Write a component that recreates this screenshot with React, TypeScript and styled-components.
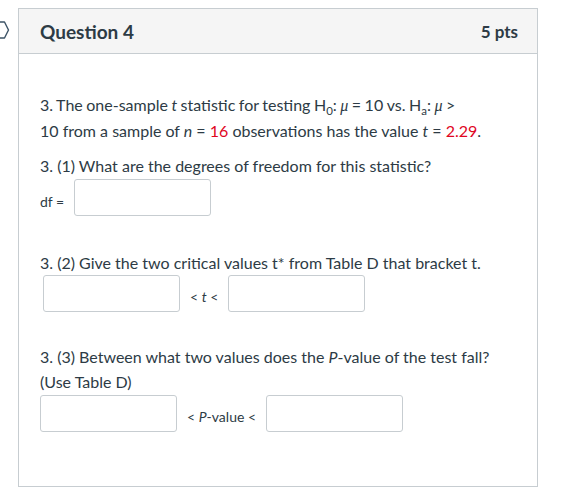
import React from 'react'
import styled, { createGlobalStyle } from 'styled-components'

const GlobalStyle = createGlobalStyle`
  html, body {
    margin: 0;
    padding: 0;
    background: #fff;
  }
  body {
    font-family: Lato, "Noto Sans", sans-serif;
    color: #2d3b45;
  }
`

const Page = styled.div`
  position: relative;
  padding: 8px 41px 0 18px;
  width: 579px;
  box-sizing: border-box;
`

const FlagIcon = styled.svg`
  position: absolute;
  left: 0;
  top: 21px;
`

const Card = styled.div`
  border: 1px solid #c7cdd1;
  height: 479px;
  box-sizing: border-box;
`

const Header = styled.div`
  display: flex;
  justify-content: space-between;
  align-items: center;
  height: 44px;
  padding: 0 19px 0 21px;
  background: #f5f5f5;
  border-bottom: 1px solid #c7cdd1;
`

const Title = styled.h2`
  margin: 0;
  font-size: 19px;
  font-weight: 700;
  color: #2d3b45;
`

const Points = styled.span`
  font-size: 17px;
  font-weight: 700;
  color: #2d3b45;
`

const Body = styled.div`
  padding: 38px 21px 0 21px;
  font-size: 16px;
  line-height: 25px;
`

const Para = styled.p<{ $gap?: number }>`
  margin: 0 0 ${p => p.$gap ?? 10}px 0;
`

const Tight = styled.span`
  word-spacing: -0.6px;
`

const Sub = styled.sub`
  font-size: 11.5px;
  line-height: 0;
`

const Mu = styled.i`
  font-family: "Liberation Serif", serif;
  font-size: 16px;
`

const Red = styled.span`
  color: #e0061f;
`

const Row = styled.div<{ $indent?: number; $gap?: number }>`
  display: flex;
  align-items: center;
  gap: 10px;
  margin-left: ${p => p.$indent ?? 0}px;
  margin-bottom: ${p => p.$gap ?? 0}px;
`

const Box = styled.input`
  width: 137px;
  height: 37px;
  box-sizing: border-box;
  border: 1px solid #c7cdd1;
  border-radius: 3px;
  background: #fff;
  margin: 0;
  padding: 0 6px;
  font: inherit;
`

const Small = styled.span<{ $shift?: number }>`
  font-size: 14px;
  position: relative;
  top: ${p => p.$shift ?? 0}px;
`

export default function App() {
  return (
    <>
      <GlobalStyle />
      <Page>
        <FlagIcon width="10" height="18" viewBox="0 0 10 18">
          <polyline points="0,1 4.5,1 8.5,9 4.5,17 0,17" fill="none" stroke="#3d5366" strokeWidth="1.4" strokeLinejoin="round" />
        </FlagIcon>
        <Card>
          <Header>
            <Title>Question 4</Title>
            <Points>5 pts</Points>
          </Header>
          <Body>
            <Para>
              <Tight>
                3. The one-sample <i>t</i> statistic for testing H<Sub>0</Sub>: <Mu>μ</Mu> = 10 vs. H<Sub>a</Sub>: <Mu>μ</Mu> &gt;
              </Tight>
              <br />
              10 from a sample of <i>n</i> = <Red>16</Red> observations has the value <i>t</i> = <Red>2.29</Red>.
            </Para>
            <Para $gap={1}>3. (1) What are the degrees of freedom for this statistic?</Para>
            <Row $gap={34}>
              <Small $shift={4}>df =</Small>
              <Box aria-label="df" />
            </Row>
            <Para $gap={0}>3. (2) Give the two critical values t* from Table D that bracket t.</Para>
            <Row $indent={3} $gap={32}>
              <Box aria-label="lower t" />
              <Small $shift={3}>&lt; <i>t</i> &lt;</Small>
              <Box aria-label="upper t" />
            </Row>
            <Para $gap={1}>
              3. (3) Between what two values does the <i>P</i>-value of the test fall?
              <br />
              (Use Table D)
            </Para>
            <Row>
              <Box aria-label="lower p" />
              <Small $shift={3}>&lt; <i>P</i>-value &lt;</Small>
              <Box aria-label="upper p" />
            </Row>
          </Body>
        </Card>
      </Page>
    </>
  )
}
